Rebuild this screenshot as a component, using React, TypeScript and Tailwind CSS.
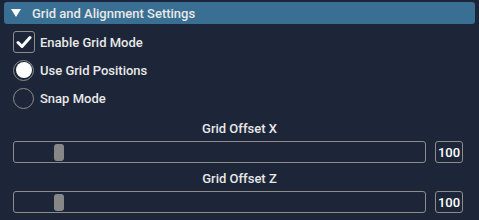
import React from "react";

function Slider({ label }: { label: string }) {
  return (
    <div className="flex flex-col">
      <div className="h-[20px] flex items-center justify-center text-[13px] font-medium text-[#e6e6e6] leading-none">
        {label}
      </div>
      <div className="flex items-center h-[22px] mt-[3px]">
        <div className="relative ml-[9px] w-[413px] h-[22px] rounded-[3px] border border-[#8c8c8c]">
          <div className="absolute left-[40px] top-[2px] w-[10px] h-[17px] rounded-[3px] bg-[#878787]" />
        </div>
        <div className="ml-[9px] w-[28px] h-[22px] rounded-[3px] border border-[#8c8c8c] flex items-center justify-center text-[13px] font-medium text-white leading-none">
          100
        </div>
      </div>
    </div>
  );
}

export default function App() {
  return (
    <div
      className="w-[479px] h-[220px] bg-[#1d2638] pt-[2px] px-[4px] overflow-hidden"
      style={{ fontFamily: "Roboto, 'Noto Sans', sans-serif" }}
    >
      <div className="h-[22px] rounded-[3px] bg-[#396f92] flex items-center text-[13px] font-medium text-[#e8e8e8] leading-none">
        <svg width="10" height="9" viewBox="0 0 10 9" className="ml-[7px]">
          <polygon points="0,0 10,0 5,8" fill="#ffffff" />
        </svg>
        <span className="ml-[11px]">Grid and Alignment Settings</span>
      </div>
      <div className="flex flex-col pl-[9px]">
        <div className="flex items-center h-[22px] mt-[7px]">
          <div className="w-[22px] h-[22px] rounded-[3px] border border-[#8c8c8c] flex items-center justify-center">
            <svg width="16" height="14" viewBox="0 0 16 14">
              <path d="M2 7.5 L6 11.5 L14 2.5" fill="none" stroke="#ffffff" strokeWidth="3" strokeLinecap="round" strokeLinejoin="round" />
            </svg>
          </div>
          <span className="ml-[5px] text-[13px] font-medium text-[#e8e8e8] leading-none">Enable Grid Mode</span>
        </div>
        <div className="flex items-center h-[22px] mt-[6px]">
          <div className="w-[21px] h-[21px] rounded-full border border-[#8c8c8c] flex items-center justify-center">
            <div className="w-[16px] h-[16px] rounded-full bg-white" />
          </div>
          <span className="ml-[6px] text-[13px] font-medium text-[#e8e8e8] leading-none">Use Grid Positions</span>
        </div>
        <div className="flex items-center h-[22px] mt-[6px]">
          <div className="w-[21px] h-[21px] rounded-full border border-[#8c8c8c]" />
          <span className="ml-[6px] text-[13px] font-medium text-[#e8e8e8] leading-none">Snap Mode</span>
        </div>
      </div>
      <div className="mt-[9px] flex flex-col">
        <Slider label="Grid Offset X" />
        <div className="mt-[5px]">
          <Slider label="Grid Offset Z" />
        </div>
      </div>
    </div>
  );
}
